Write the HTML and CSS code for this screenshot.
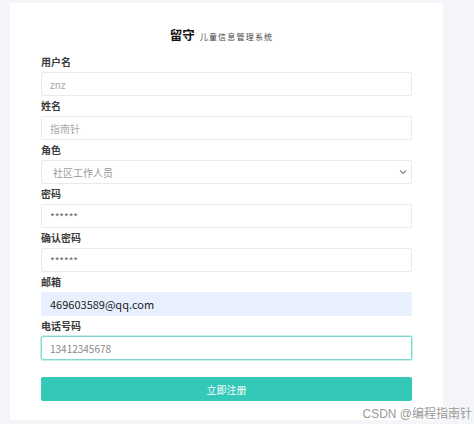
FILE: index.html
```html
<!DOCTYPE html>
<html lang="zh-CN">
    <head>
        <meta charset="UTF-8" />
        <meta name="viewport" content="width=device-width, initial-scale=1.0" />
        <title>留守儿童信息管理系统 - 注册</title>
        <link rel="stylesheet" href="styles.css">
    </head>

    <body>
        <!-- 注册卡片 -->
        <div class="card">
            <h1 class="title">留守<span class="sub">儿童信息管理系统</span></h1>
            <form class="form">
                <label class="field">
                    <span class="label">用户名</span>
                    <input class="input" type="text" placeholder="znz" />
                </label>
                <label class="field">
                    <span class="label">姓名</span>
                    <input class="input" type="text" placeholder="指南针" />
                </label>
                <label class="field">
                    <span class="label">角色</span>
                    <div class="select">
                        <span>社区工作人员</span>
                        <svg width="8" height="6" viewBox="0 0 8 6"><path d="M1 1.5 L4 4.5 L7 1.5" fill="none" stroke="#888" stroke-width="1.2"/></svg>
                    </div>
                </label>
                <label class="field">
                    <span class="label">密码</span>
                    <input class="input pass" type="text" placeholder="******" />
                </label>
                <label class="field">
                    <span class="label">确认密码</span>
                    <input class="input pass" type="text" placeholder="******" />
                </label>
                <label class="field">
                    <span class="label">邮箱</span>
                    <input class="input filled" type="text" value="469603589@qq.com" />
                </label>
                <label class="field">
                    <span class="label">电话号码</span>
                    <input class="input focus" type="text" value="13412345678" />
                </label>
                <button class="btn" type="button">立即注册</button>
            </form>
        </div>
        <!-- 水印 -->
        <div class="mark">CSDN @编程指南针</div>
    </body>
</html>
```

FILE: styles.css
```css
* {
    margin: 0;
    padding: 0;
    box-sizing: border-box;
}
html,
body {
    height: 100%;
    overflow: hidden;
}
body {
    background: #f4f5f8;
    font-family: "Noto Sans CJK SC", "Noto Sans", sans-serif;
    color: #333;
    padding-top: 3px;
    padding-left: 10px;
}
.card {
    width: 433px;
    height: 417px;
    background: #fff;
    padding: 20px 31px 20px;
}
.title {
    height: 24px;
    line-height: 24px;
    margin-bottom: 5px;
    text-align: center;
    font-size: 12.5px;
    font-weight: 700;
    color: #111;
    padding-right: 10px;
}
.sub {
    margin-left: 5px;
    font-size: 8px;
    font-weight: 400;
    letter-spacing: 1.2px;
    color: #444;
}
.form {
    display: flex;
    flex-direction: column;
}
.field {
    display: flex;
    flex-direction: column;
}
.label {
    height: 20px;
    line-height: 20px;
    font-size: 10px;
    font-weight: 600;
    color: #3a3a3a;
}
.input,
.select {
    width: 100%;
    height: 24px;
    border: 1px solid #ebebeb;
    border-radius: 2px;
    padding: 0 8px;
    font-family: "Noto Sans CJK SC", "Noto Sans", sans-serif;
    font-size: 10px;
    color: #888;
    background: #fff;
    outline: none;
}
.input::placeholder {
    color: #a8a8a8;
}
.pass::placeholder {
    color: #666;
}
.select {
    display: flex;
    align-items: center;
    justify-content: space-between;
    padding: 0 4px 0 11px;
    color: #999;
}
.filled {
    background: #e8f0fe;
    border-color: #e8f0fe;
    color: #222;
    font-size: 11px;
}
.focus {
    border-color: #7fd9ce;
    box-shadow: 0 0 0 1px #c6efe9;
    color: #888;
}
.btn {
    margin-top: 17px;
    height: 24px;
    border: none;
    border-radius: 2px;
    background: #33c8b7;
    color: #fff;
    font-family: "Noto Sans CJK SC", sans-serif;
    font-size: 10px;
}
.mark {
    position: absolute;
    right: 2px;
    bottom: 3px;
    font-family: "Liberation Sans", "Noto Sans CJK SC", sans-serif;
    font-size: 12px;
    color: #9a9a9a;
}
```
